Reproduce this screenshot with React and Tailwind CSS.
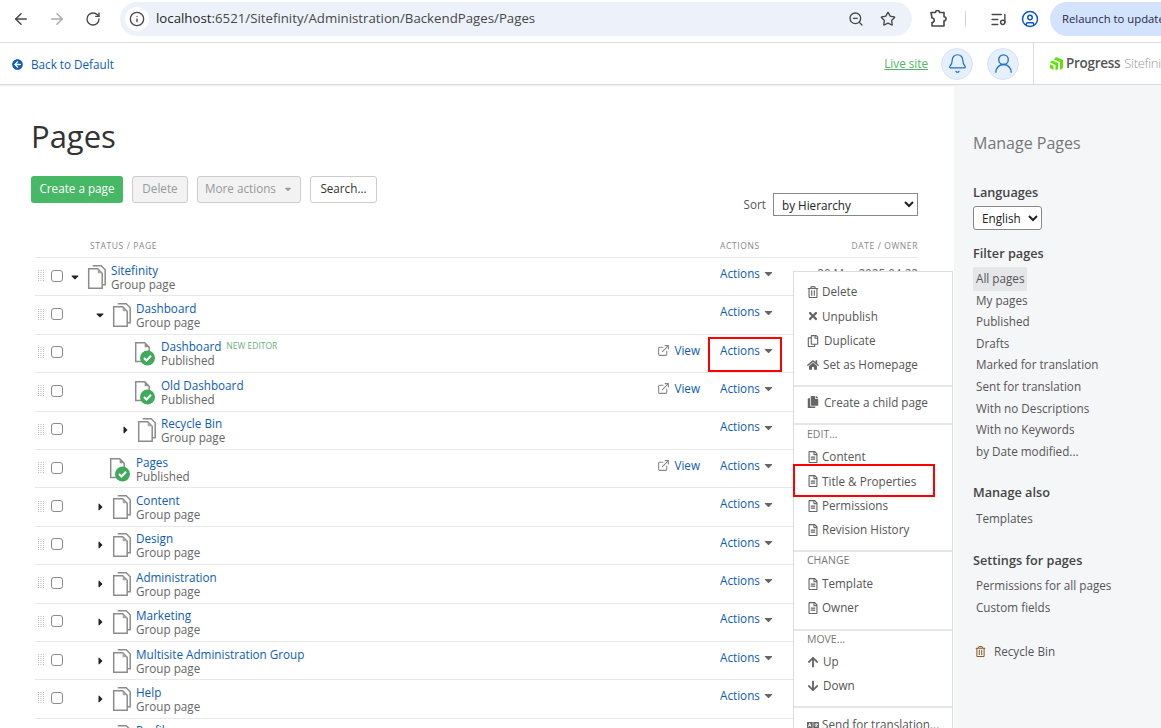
import { ArrowLeft, ArrowRight, RotateCw, Info, ZoomOut, Star, ListMusic, CircleUser, Bell, UserRound, ExternalLink } from 'lucide-react';
import { FaArrowCircleLeft, FaCaretDown, FaRegTrashAlt, FaTimes, FaRegCopy, FaHome, FaCopy, FaRegFileAlt, FaArrowUp, FaArrowDown, FaLanguage } from 'react-icons/fa';

const rows = [
  { title: 'Sitefinity', sub: 'Group page', depth: 0, arrow: 'down', date: '20 Mar 2025 04:22' },
  { title: 'Dashboard', sub: 'Group page', depth: 1, arrow: 'down' },
  { title: 'Dashboard', sub: 'Published', depth: 2, published: true, badge: 'NEW EDITOR', view: true },
  { title: 'Old Dashboard', sub: 'Published', depth: 2, published: true, view: true },
  { title: 'Recycle Bin', sub: 'Group page', depth: 2, arrow: 'right' },
  { title: 'Pages', sub: 'Published', depth: 1, published: true, view: true },
  { title: 'Content', sub: 'Group page', depth: 1, arrow: 'right' },
  { title: 'Design', sub: 'Group page', depth: 1, arrow: 'right' },
  { title: 'Administration', sub: 'Group page', depth: 1, arrow: 'right' },
  { title: 'Marketing', sub: 'Group page', depth: 1, arrow: 'right' },
  { title: 'Multisite Administration Group', sub: 'Group page', depth: 1, arrow: 'right' },
  { title: 'Help', sub: 'Group page', depth: 1, arrow: 'right' },
  { title: 'Profile', sub: 'Group page', depth: 1, arrow: 'right' },
];

const menu = [
  { pad: 'pt-2 pb-2', items: [['Delete', FaRegTrashAlt], ['Unpublish', FaTimes], ['Duplicate', FaRegCopy, 'mr-[5px]'], ['Set as Homepage', FaHome, 'mr-1']] },
  { pad: 'pt-[3px] pb-[9px]', items: [['Create a child page', FaCopy, 'mr-[5px]']] },
  { pad: 'pb-2', head: 'EDIT...', items: [['Content', FaRegFileAlt], ['Title & Properties', FaRegFileAlt], ['Permissions', FaRegFileAlt], ['Revision History', FaRegFileAlt]] },
  { pad: 'pb-[9px]', head: 'CHANGE', items: [['Template', FaRegFileAlt], ['Owner', FaRegFileAlt]] },
  { pad: 'pb-2', head: 'MOVE...', tight: true, items: [['Up', FaArrowUp, 'mr-1'], ['Down', FaArrowDown, 'mr-1']] },
  { pad: 'pt-1', items: [['Send for translation...', FaLanguage]] },
];

const filters = ['All pages', 'My pages', 'Published', 'Drafts', 'Marked for translation', 'Sent for translation', 'With no Descriptions', 'With no Keywords', 'by Date modified...'];

function Grip() {
  return (
    <svg width="6" height="11" viewBox="0 0 6 11" className="shrink-0 fill-[#bbbbbb]">
      {[0, 2, 4, 6, 8, 10].map((y) => (
        <g key={y}>
          <rect x="0" y={y} width="1" height="1" />
          <rect x="2.5" y={y} width="1" height="1" />
          <rect x="5" y={y} width="1" height="1" />
        </g>
      ))}
    </svg>
  );
}

function PageIcon({ published }) {
  if (published) {
    return (
      <svg width="24" height="26" viewBox="0 0 24 26" className="shrink-0 overflow-visible">
        <path d="M-1.300 2.700h9l4.500 4.500v14.300h-13.500z" fill="#fff" stroke="#8c8c8c" strokeWidth="1.500" />
        <path d="M7.700 2.700v4.500h4.500z" fill="#8c8c8c" />
        <circle cx="10.500" cy="18" r="7.500" fill="#3fa95c" />
        <path d="M7 18l2.500 2.500 4.500-4.700" fill="none" stroke="#fff" strokeWidth="2" />
      </svg>
    );
  }
  return (
    <svg width="24" height="26" viewBox="0 0 24 26" className="shrink-0">
      <path d="M5.700 1.700h8.500l4 4v15h-3" fill="none" stroke="#8c8c8c" strokeWidth="1.500" />
      <path d="M1.700 4.700h9l4.500 4.500v15.100h-13.500z" fill="#fff" stroke="#8c8c8c" strokeWidth="1.500" />
      <path d="M10.700 4.700v4.500h4.500z" fill="#a6a6a6" />
    </svg>
  );
}

function Row({ row }) {
  return (
    <div className="flex h-[38.4px] items-center border-t border-[#e8e8e8] text-[11.7px]">
      <div className="mb-[2px] ml-[3px] w-[13px]"><Grip /></div>
      <input type="checkbox" className="mb-[2px] h-3 w-3 shrink-0 appearance-none rounded-[3px] border border-[#8a8a8a] bg-white" />
      <div className="flex items-center" style={{ paddingLeft: row.depth * 25 }}>
        <div className="flex w-[24px] justify-center text-[#222]">
          {row.arrow === 'down' && <FaCaretDown className="h-3 w-3" />}
          {row.arrow === 'right' && <FaCaretDown className="h-3 w-3 -rotate-90" />}
        </div>
        <PageIcon published={row.published} />
        <div className="leading-[14px]">
          <div className="flex items-center gap-[5px]">
            <a className="text-[#0e5bb5]">{row.title}</a>
            {row.badge && <span className="text-[8.500px] text-[#6bae7d]">{row.badge}</span>}
          </div>
          <div className="text-[#666]">{row.sub}</div>
        </div>
      </div>
      <div className="flex-1" />
      {row.view && (
        <div className="mb-[6px] mr-5 flex items-center gap-1 text-[#0e5bb5]">
          <ExternalLink className="h-[13px] w-[13px] text-[#888]" />
          View
        </div>
      )}
      <div className="mb-[6px] flex w-[198px] shrink-0 items-center text-[#0e5bb5]">
        Actions
        <FaCaretDown className="ml-[2px] h-[13px] w-[13px] text-[#666]" />
        {row.date && <span className="ml-auto text-[#666]">{row.date}</span>}
      </div>
    </div>
  );
}

function ExtensionIcon() {
  return (
    <svg width="18" height="18" viewBox="0 0 18 18" className="ml-[17px] shrink-0" fill="none" stroke="currentColor" strokeWidth="1.600" strokeLinejoin="round">
      <path d="M2 2.500h4.500a2 2 0 0 1 4 0H15v4.300a2 2 0 0 1 0 4V16H3v-3.500a2 2 0 0 0 0-4.500z" />
    </svg>
  );
}

function BrowserBar() {
  return (
    <div className="flex h-[43px] items-center border-b border-[#dedede] bg-white pb-1 pl-3 text-[#474747]">
      <ArrowLeft className="h-[18px] w-[18px]" />
      <ArrowRight className="ml-[18px] h-[18px] w-[18px] text-[#aaa]" />
      <RotateCw className="ml-[19px] h-4 w-4" />
      <div className="ml-[19px] flex h-[34px] w-[792px] items-center rounded-full bg-[#edf2fa] pl-[5px] pr-4">
        <div className="flex h-[24px] w-[24px] items-center justify-center rounded-full bg-white">
          <Info className="h-4 w-4" />
        </div>
        <span className="ml-[7px] text-[13.250px] text-[#1f1f1f]">localhost<span className="text-[#474747]">:6521/Sitefinity/Administration/BackendPages/Pages</span></span>
        <ZoomOut className="ml-auto h-4 w-4" />
        <Star className="ml-4 h-4 w-4" />
      </div>
      <ExtensionIcon />
      <div className="ml-[18px] h-[16px] w-px bg-[#c7d7ee]" />
      <ListMusic className="ml-[24px] h-[17px] w-[17px]" />
      <CircleUser className="ml-[14px] h-[18px] w-[18px] text-[#0b57d0]" />
      <div className="ml-[11px] flex h-[34px] flex-1 items-center overflow-hidden whitespace-nowrap rounded-l-full bg-[#d3e3fd] pl-[12px] text-[11.300px] text-[#1f2a44]">
        Relaunch to update
      </div>
    </div>
  );
}

function Header() {
  return (
    <div className="flex h-[42px] items-center border-b border-[#d9d9d9] bg-white pl-3 shadow-[0_1px_2px_rgba(0,0,0,0.08)]">
      <FaArrowCircleLeft className="mt-[2px] h-[11px] w-[11px] text-[#0e5bb5]" />
      <a className="ml-2 mt-[2px] text-[11.700px] text-[#0e5bb5]">Back to Default</a>
      <a className="ml-auto text-[11.700px] text-[#52b566] underline">Live site</a>
      <div className="ml-[13px] flex h-8 w-8 items-center justify-center rounded-full border border-[#d6e4f5] bg-[#e6f0fb] text-[#1a6fd0]">
        <Bell className="h-[21px] w-[21px]" strokeWidth={1.4} />
      </div>
      <div className="ml-[14px] flex h-8 w-8 items-center justify-center rounded-full border border-[#d6e4f5] bg-[#e6f0fb] text-[#1a6fd0]">
        <UserRound className="h-[23px] w-[23px]" strokeWidth={1.4} />
      </div>
      <div className="ml-[14px] h-full w-px bg-[#dcdcdc]" />
      <div className="flex w-[127px] items-center overflow-hidden whitespace-nowrap pl-4">
        <svg width="14" height="14" viewBox="0 0 14 14" className="shrink-0 fill-[#5ce500]">
          <path d="M6 0l7 3v8l-3 2V5L4 2.500zM2 3.500l6 2.500v6l-2.500 1.500V8L0 5.500zM0 7.500l3.500 1.500v4L0 11z" />
        </svg>
        <span className="ml-[2px] text-[13.500px] font-semibold tracking-[-0.3px] text-[#555]">Progress</span>
        <span className="ml-1 text-[13px] font-light tracking-[-0.3px] text-[#999]">Sitefinity</span>
      </div>
    </div>
  );
}

function ActionsMenu() {
  return (
    <div className="absolute left-[793px] top-[271px] w-[160px] border border-[#dddddd] bg-white text-[11.700px] text-[#555]">
      {menu.map((section, i) => (
        <div key={i} className={`${section.pad} ${i > 0 ? 'border-t-2 border-[#e6e6e6]' : ''}`}>
          {section.head && (
            <div className={`${section.tight ? 'mb-[0.500px]' : 'mb-[1.500px]'} flex h-[18px] items-center pl-[13px] text-[10.500px] text-[#777]`}>{section.head}</div>
          )}
          {section.items.map(([label, Icon, gap]) => (
            <div key={label} className="flex h-[24.3px] items-center whitespace-nowrap pl-[13px]">
              <Icon className={`${gap || 'mr-[3px]'} h-[12px] w-[12px] shrink-0 text-[#666]`} />
              {label}
            </div>
          ))}
        </div>
      ))}
    </div>
  );
}

function Sidebar() {
  return (
    <aside className="w-[207px] shrink-0 bg-[#f5f6f8] pl-[19px] text-[11.700px] text-[#555]">
      <h2 className="mt-[46px] text-[16px] leading-6 text-[#777]">Manage Pages</h2>
      <h3 className="mt-[29px] text-[12.700px] font-semibold leading-4 text-[#444]">Languages</h3>
      <select className="mt-[6px] block h-[24px] w-[69px] rounded-[3px] border border-[#888] bg-white pl-1 text-[11.700px] text-[#222]">
        <option>English</option>
      </select>
      <h3 className="mt-[15px] text-[12.700px] font-semibold leading-4 text-[#444]">Filter pages</h3>
      <ul className="mt-[7px]">
        {filters.map((f, i) => (
          <li key={f} className="flex h-[21.6px] items-center">
            <span className={`px-[3px] ${i === 0 ? 'rounded-[2px] bg-[#e4e6e8] py-[3px]' : ''}`}>{f}</span>
          </li>
        ))}
      </ul>
      <h3 className="mt-[22px] text-[12.700px] font-semibold leading-4 text-[#444]">Manage also</h3>
      <div className="mt-[10px] px-[3px] leading-4">Templates</div>
      <h3 className="mt-[26px] text-[12.700px] font-semibold leading-4 text-[#444]">Settings for pages</h3>
      <div className="mt-[9px] px-[3px] leading-4">Permissions for all pages</div>
      <div className="mt-[6px] px-[3px] leading-4">Custom fields</div>
      <div className="mt-[28px] flex items-center pl-[2px] leading-4">
        <FaRegTrashAlt className="mr-[8px] h-[11px] w-[11px] text-[#8a5a2b]" />
        Recycle Bin
      </div>
    </aside>
  );
}

export default function App() {
  return (
    <div className="relative flex h-[728px] w-[1161px] flex-col overflow-hidden bg-white font-['Open_Sans',sans-serif]">
      <BrowserBar />
      <Header />
      <div className="flex flex-1 overflow-hidden">
        <main className="min-w-0 flex-1 pl-[31px]">
          <h1 className="mt-[29px] text-[31px] leading-[44px] text-[#333]">Pages</h1>
          <div className="mt-[18px] flex gap-[9px] text-[11.700px]">
            <button className="h-[27px] w-[92px] rounded-[3px] bg-[#46b866] pb-[2px] text-white">Create a page</button>
            <button className="h-[27px] w-[56px] rounded-[3px] border border-[#ccc] bg-[#f2f2f2] pb-[2px] text-[#999]">Delete</button>
            <button className="flex h-[27px] w-[104px] items-center justify-center gap-[7px] rounded-[3px] border border-[#ccc] bg-[#f2f2f2] pb-[2px] text-[#999]">
              More actions
              <FaCaretDown className="h-[10px] w-[10px]" />
            </button>
            <button className="h-[27px] w-[67px] rounded-[3px] border border-[#ccc] bg-white pb-[2px] text-[#333]">Search...</button>
          </div>
          <div className="ml-[4px] w-[883px]">
            <div className="-mt-[10px] flex items-center justify-end gap-[7px] text-[11.700px] text-[#555]">
              Sort
              <select className="h-[23px] w-[145px] border border-[#888] bg-white pl-1 text-[11.700px] text-[#222]">
                <option>by Hierarchy</option>
              </select>
            </div>
            <div className="mt-[20px] flex h-[21px] items-center text-[8.500px] tracking-[0.6px] text-[#888]">
              <span className="ml-[55px]">STATUS / PAGE</span>
              <div className="ml-auto flex w-[198px] justify-between">
                <span>ACTIONS</span>
                <span>DATE / OWNER</span>
              </div>
            </div>
            {rows.map((row, i) => <Row key={i} row={row} />)}
          </div>
        </main>
        <Sidebar />
      </div>
      <ActionsMenu />
      <div className="absolute left-[708px] top-[337px] h-[35px] w-[74px] border-[2.5px] border-[#ff0000]" />
      <div className="absolute left-[793px] top-[464px] h-[33px] w-[142px] border-[2.5px] border-[#ff0000]" />
    </div>
  );
}
